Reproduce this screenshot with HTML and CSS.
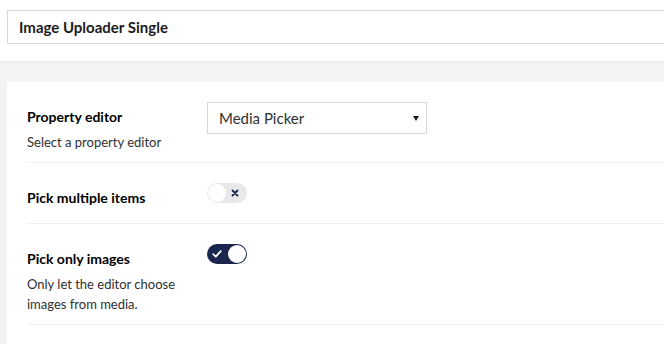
FILE: index.html
```html
<!DOCTYPE html>
<html lang="en">
<head>
    <meta charset="UTF-8">
    <meta name="viewport" content="width=device-width, initial-scale=1.0">
    <title>Image Uploader Single</title>
    <link rel="stylesheet" href="styles.css">
</head>
<body>
    <header class="editor-header">
        <input class="name-input" type="text" value="Image Uploader Single">
    </header>
    <main class="panel">
        <div class="prop-row">
            <div class="prop-label">
                <h3>Property editor</h3>
                <p>Select a property editor</p>
            </div>
            <div class="prop-editor">
                <div class="picker">
                    <span>Media Picker</span>
                    <svg class="picker-arrow" width="6" height="5" viewBox="0 0 6 5"><polygon points="0,0 6,0 3,5" fill="#1b1b1d"/></svg>
                </div>
            </div>
        </div>
        <div class="prop-row">
            <div class="prop-label">
                <h3>Pick multiple items</h3>
            </div>
            <div class="prop-editor">
                <div class="toggle">
                    <span class="toggle-knob"></span>
                    <svg class="toggle-icon" width="8" height="8" viewBox="0 0 8 8"><path d="M1.5 1.5 L6.5 6.5 M6.5 1.5 L1.5 6.5" stroke="#1b264f" stroke-width="1.8" stroke-linecap="round"/></svg>
                </div>
            </div>
        </div>
        <div class="prop-row">
            <div class="prop-label">
                <h3>Pick only images</h3>
                <p>Only let the editor choose<br>images from media.</p>
            </div>
            <div class="prop-editor">
                <div class="toggle toggle-on">
                    <svg class="toggle-icon" width="10" height="8" viewBox="0 0 10 8"><path d="M1.2 4.2 L3.8 6.6 L8.8 1.2" stroke="#fff" stroke-width="1.8" fill="none" stroke-linecap="round" stroke-linejoin="round"/></svg>
                    <span class="toggle-knob"></span>
                </div>
            </div>
        </div>
    </main>
</body>
</html>
```

FILE: styles.css
```css
*{
    box-sizing: border-box;
    margin: 0;
    padding: 0;
}
body{
    background-color: #f3f3f5;
    font-family: Lato, "Open Sans", sans-serif;
    color: #000;
    overflow: hidden;
}
.editor-header{
    height: 62px;
    background-color: #fff;
    border-bottom: 1px solid #e9e9eb;
    padding: 10px 0 0 7px;
}
.name-input{
    display: block;
    width: calc(100% + 20px);
    height: 34px;
    border: 1px solid #d8d7d9;
    padding: 0 11px;
    font-family: Lato, sans-serif;
    font-size: 15px;
    font-weight: bold;
    color: #1b1b1d;
    outline: none;
}
.panel{
    background-color: #fff;
    margin: 20px -20px 0 7px;
    padding: 20px 0 20px 20px;
    height: 400px;
}
.prop-row{
    display: flex;
    padding: 20px 0 10px;
    border-bottom: 1px solid #f0eff1;
}
.prop-row:first-child{
    padding-top: 0;
}
.prop-label{
    width: 180px;
    flex-shrink: 0;
    padding-top: 5px;
}
.prop-label>h3{
    font-size: 14px;
    font-weight: bold;
    line-height: 20px;
}
.prop-label>p{
    font-size: 13px;
    line-height: 20px;
    color: #303033;
    margin-top: 5px;
}
.prop-editor{
    padding-bottom: 10px;
}
.picker{
    width: 220px;
    height: 32px;
    border: 1px solid #d8d7d9;
    display: flex;
    align-items: center;
    justify-content: space-between;
    padding: 0 7px 0 11px;
    font-size: 15px;
    color: #303033;
}
.picker-arrow{
    margin-top: 1px;
}
.toggle{
    width: 40px;
    height: 20px;
    border-radius: 10px;
    background-color: #e9e9eb;
    display: flex;
    align-items: center;
    gap: 5px;
    padding: 0 1px;
}
.toggle-knob{
    width: 18px;
    height: 18px;
    border-radius: 50%;
    background-color: #fff;
}
.toggle-icon{
    display: block;
}
.toggle-on{
    background-color: #1b264f;
    gap: 6px;
    padding: 0 1px 0 5px;
}
```
